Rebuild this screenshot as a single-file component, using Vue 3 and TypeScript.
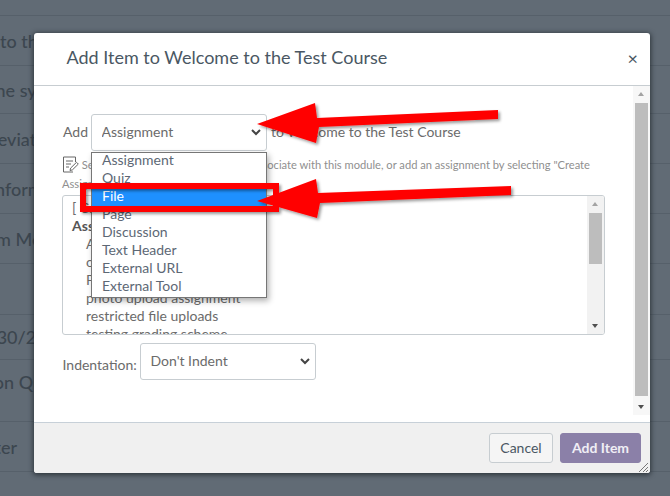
<script setup lang="ts">
interface Row { h: number; text: string; shift: number; lift: number }
const rows: Row[] = [
  { h: 16, text: '', shift: 0, lift: 0 },
  { h: 50, text: 'to the', shift: 0, lift: 0 },
  { h: 48, text: 'the syllabus', shift: -11, lift: 0 },
  { h: 50, text: 'Abbreviations', shift: -41, lift: 0 },
  { h: 50, text: 'Information', shift: -10, lift: 0 },
  { h: 50, text: 'Team Meeting', shift: -31, lift: 0 },
  { h: 51, text: '', shift: 0, lift: 0 },
  { h: 45, text: '9/30/2021', shift: -22, lift: 0 },
  { h: 62, text: 'Lesson Quiz', shift: -40, lift: 18 },
  { h: 50, text: 'Poster', shift: -34, lift: 0 },
  { h: 30, text: '', shift: 0, lift: 0 }
]
const options = ['Assignment', 'Quiz', 'File', 'Page', 'Discussion', 'Text Header', 'External URL', 'External Tool']
const listItems = ['Assignment 1', 'oral presentation', 'Peer review', 'photo upload assignment', 'restricted file uploads', 'testing grading scheme']
</script>

<template>
  <div class="page">
    <div class="backdrop">
      <div
        v-for="(r, i) in rows"
        :key="i"
        class="bg-row"
        :style="{ height: r.h + 'px', marginLeft: r.shift + 'px', paddingBottom: r.lift + 'px' }"
      >{{ r.text }}</div>
    </div>

    <section class="dialog">
      <header class="head">
        <h2 class="title">Add Item to Welcome to the Test Course</h2>
        <span class="close">×</span>
      </header>

      <div class="body">
        <div class="content">
          <div class="add-row">
            <label class="add-label">Add</label>
            <div class="select-wrap">
              <select class="sel sel-type">
                <option>Assignment</option>
              </select>
              <ul class="menu">
                <li v-for="o in options" :key="o" class="opt" :class="{ active: o === 'File' }">{{ o }}</li>
              </ul>
            </div>
            <span class="to">to Welcome to the Test Course</span>
          </div>

          <p class="help">
            <svg class="help-icon" viewBox="0 0 17 17" width="17" height="17" fill="none" stroke="#666" stroke-width="1">
              <path d="M11 16H1.5V1H13.5V6" />
              <path d="M4 5H11M4 8H9M4 11H7" />
              <path d="M8 14.5l.6-2.4L14.5 6.3l1.8 1.8-5.9 5.8z" />
            </svg>
            Select the assignment you want to associate with this module, or add an assignment by selecting "Create Assignment".
          </p>

          <div class="list">
            <div class="list-items">
              <div class="li">[ Create Assignment ]</div>
              <div class="li li-group">Assignments</div>
              <div v-for="it in listItems" :key="it" class="li li-item">{{ it }}</div>
            </div>
            <div class="bar bar-inner">
              <span class="up"></span>
              <span class="thumb"></span>
              <span class="down"></span>
            </div>
          </div>

          <div class="indent-row">
            <label class="indent-label">Indentation:</label>
            <select class="sel sel-indent">
              <option>Don't Indent</option>
            </select>
          </div>
        </div>

        <div class="bar bar-outer">
          <span class="up"></span>
          <span class="thumb"></span>
          <span class="down"></span>
        </div>
      </div>

      <footer class="foot">
        <button class="btn cancel">Cancel</button>
        <button class="btn primary">Add Item</button>
        <svg class="grip" viewBox="0 0 10 10" width="10" height="10" stroke="#777" stroke-width="1">
          <path d="M1 10L10 1M5 10L10 5M8 10L10 8" />
        </svg>
      </footer>
    </section>

    <svg class="marks" viewBox="0 0 670 496" width="670" height="496">
      <defs>
        <filter id="sh" x="-10%" y="-30%" width="120%" height="160%">
          <feDropShadow dx="2" dy="2" stdDeviation="1.5" flood-color="#000" flood-opacity="0.4" />
        </filter>
      </defs>
      <g fill="#ff0000" filter="url(#sh)">
        <path d="M80 183H279V212H80ZM86 189V206H273V189Z" fill-rule="evenodd" />
        <path d="M257 124L315 103L317 118L498 110L498 119L319 127L316 143Z" />
        <path d="M257 201L316 179L318 193L511 186L511 195L320 203L317 218Z" />
      </g>
    </svg>
  </div>
</template>

<style>
html, body { margin: 0; background: #616b75; }
</style>

<style scoped>
.page {
  position: relative;
  width: 670px;
  height: 496px;
  overflow: hidden;
  background: #616b75;
  font-family: Lato, "Open Sans", sans-serif;
}
.backdrop { display: flex; flex-direction: column; }
.bg-row {
  box-sizing: border-box;
  display: flex;
  align-items: center;
  border-bottom: 1px solid #56606a;
  color: #3c464f;
  font-size: 18px;
  font-weight: 500;
  white-space: nowrap;
}
.dialog {
  position: absolute;
  z-index: 1;
  left: 34px;
  top: 33px;
  width: 616px;
  height: 440px;
  display: flex;
  flex-direction: column;
  background: #fff;
  border-radius: 3px;
  box-shadow: 0 1px 5px 1px rgba(30, 36, 42, 0.75);
}
.head {
  box-sizing: border-box;
  height: 53px;
  display: flex;
  align-items: center;
  justify-content: space-between;
  padding: 0 12px 0 32.5px;
  border-bottom: 1px solid #c7cdd1;
}
.title {
  margin: 0 0 4px;
  font-size: 18px;
  font-weight: 400;
  color: #4a5763;
}
.close { font-size: 18px; line-height: 18px; color: #4a5763; margin-bottom: 3px; }
.body { flex: 1; min-height: 0; display: flex; }
.content { flex: 1; min-width: 0; padding: 28px 28px 0; box-sizing: border-box; }
.add-row { display: flex; align-items: center; height: 37px; color: #6b6b6b; font-size: 14px; }
.add-label { width: 28px; padding: 0 0 2px 1px; }
.select-wrap { position: relative; width: 176px; height: 37px; }
.to { margin-left: 4px; padding-bottom: 2px; white-space: nowrap; }
.sel {
  appearance: none;
  box-sizing: border-box;
  width: 176px;
  height: 37px;
  margin: 0;
  border: 1px solid #c7cdd1;
  border-radius: 3px;
  background: #fff url("data:image/svg+xml,%3Csvg xmlns='http://www.w3.org/2000/svg' width='10' height='7'%3E%3Cpath d='M1 1l4 4 4-4' fill='none' stroke='%23444' stroke-width='2'/%3E%3C/svg%3E") no-repeat right 5px center;
  font: 14px Lato, sans-serif;
  color: #6b6b6b;
  padding: 0 0 2px 9.5px;
}
.menu {
  position: absolute;
  left: 0;
  top: 38px;
  z-index: 2;
  box-sizing: border-box;
  width: 176px;
  height: 146px;
  margin: 0;
  padding: 0;
  list-style: none;
  overflow: hidden;
  background: #fff;
  border: 1px solid #767676;
  box-shadow: 2px 3px 6px rgba(0, 0, 0, 0.3);
}
.opt { height: 18px; line-height: 14px; padding-left: 10px; font-size: 14px; color: #5d6875; }
.opt.active { background: #1e90ff; color: #fff; }
.help {
  margin: 4px 0 0;
  height: 40px;
  font-size: 11.15px;
  line-height: 19px;
  color: #8f8f8f;
}
.help-icon { vertical-align: -4px; }
.list {
  box-sizing: border-box;
  display: flex;
  height: 140px;
  border: 1px solid #c7cdd1;
  border-radius: 3px;
  overflow: hidden;
}
.list-items { flex: 1; min-width: 0; padding-top: 3px; overflow: hidden; font-size: 14px; color: #6b6b6b; }
.li { height: 18px; line-height: 18px; padding-left: 9px; white-space: nowrap; }
.li-group { font-weight: 700; color: #555; }
.li-item { padding-left: 23px; }
.bar {
  position: relative;
  display: flex;
  flex-direction: column;
  align-items: center;
  background: #f2f2f2;
}
.bar-inner { width: 17px; }
.bar-inner .thumb { position: absolute; top: 17px; left: 2px; width: 13px; height: 51px; }
.bar-inner .up { top: 6px; }
.bar-inner .down { bottom: 6px; }
.bar-outer { width: 17px; height: 329px; background: #f7f7f7; }
.bar-outer .thumb { position: absolute; top: 17px; left: 2px; width: 13px; height: 293px; }
.bar-outer .up { top: 6px; }
.bar-outer .down { bottom: 6px; }
.thumb { background: #bdbdbd; }
.up, .down { position: absolute; left: 5px; width: 0; height: 0; border-left: 3.5px solid transparent; border-right: 3.5px solid transparent; }
.up { border-bottom: 4px solid #a3a3a3; }
.down { border-top: 4px solid #505050; }
.indent-row { display: flex; align-items: flex-start; margin-top: 8px; color: #6b6b6b; font-size: 14px; }
.indent-label { width: 77px; margin-top: 13px; padding-left: 0.5px; box-sizing: content-box; margin-right: 0.5px; }
.sel-indent { padding-bottom: 2px; }
.foot {
  position: relative;
  box-sizing: border-box;
  height: 51px;
  display: flex;
  justify-content: flex-end;
  align-items: flex-start;
  gap: 7px;
  padding: 10px 9px 0 0;
  background: #f0f0f0;
  border-top: 1px solid #c7d0d8;
  border-radius: 0 0 3px 3px;
}
.btn {
  box-sizing: border-box;
  height: 30px;
  border-radius: 3px;
  font: 14px Lato, sans-serif;
  padding: 0 0 2px;
}
.cancel { width: 64px; background: #f5f5f5; border: 1px solid #c7cdd1; color: #4a5763; }
.primary { width: 81px; background: #8b80a8; border: 1px solid #8b80a8; color: #f0eef5; font-weight: 700; }
.grip { position: absolute; right: 2px; bottom: 1px; }
.marks { position: absolute; z-index: 3; left: 0; top: 0; pointer-events: none; }
</style>
